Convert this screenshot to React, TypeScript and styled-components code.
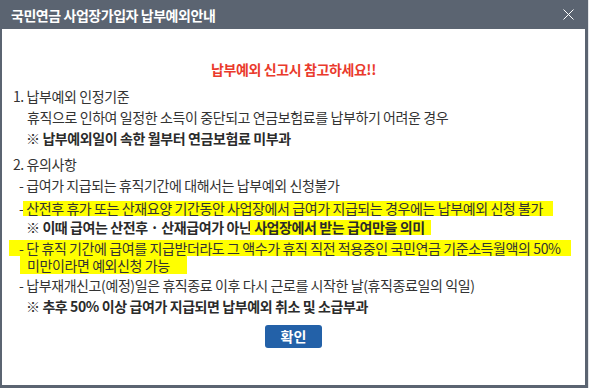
import React from "react";
import styled, { createGlobalStyle } from "styled-components";

const Global = createGlobalStyle`
  html, body { margin: 0; padding: 0; background: #e4e6e9; }
  body { font-family: "Noto Sans CJK KR", "Noto Sans", sans-serif; }
`;

const Dialog = styled.div`
  box-sizing: border-box;
  width: 588px;
  height: 388px;
  border-style: solid;
  border-color: #5b6471;
  border-width: 0 3px 3px 2px;
  background: #fff;
  display: flex;
  flex-direction: column;
`;

const Header = styled.div`
  height: 29px;
  flex: none;
  background: #5b6471;
  display: flex;
  align-items: center;
  justify-content: space-between;
  padding: 0 11px 0 9px;
`;

const Title = styled.h1`
  margin: 0;
  font-size: 14px;
  font-weight: 700;
  color: #fff;
  letter-spacing: -0.45px;
  line-height: 20px;
`;

const Close = styled.button`
  border: 0;
  background: none;
  padding: 0;
  width: 11px;
  height: 11px;
  display: flex;
  cursor: pointer;
`;

const Body = styled.div`
  flex: 1;
  padding: 0 0 0 11px;
  color: #333;
  font-size: 14px;
  letter-spacing: -0.4px;
`;

const Notice = styled.p`
  margin: 30px 0 6px -11px;
  text-align: center;
  color: #ea3a2c;
  font-weight: 700;
  line-height: 21px;
`;

const Row = styled.div<{ $indent?: number; $mt?: number; $bold?: boolean; $lh?: number }>`
  line-height: ${(p) => p.$lh ?? 21}px;
  margin-top: ${(p) => p.$mt ?? 0}px;
  padding-left: ${(p) => p.$indent ?? 0}px;
  font-weight: ${(p) => (p.$bold ? 700 : 400)};
  color: ${(p) => (p.$bold ? "#2b2b2b" : "#333")};
  white-space: nowrap;
`;

const Line = styled.div<{ $lh: number }>`
  line-height: ${(p) => p.$lh}px;
`;

const Mark = styled.span<{ $h: number; $pl: number; $pr: number }>`
  display: inline-block;
  background: #ffff00;
  line-height: ${(p) => p.$h}px;
  padding: 0 ${(p) => p.$pr}px 0 ${(p) => p.$pl}px;
  margin-left: -${(p) => p.$pl}px;
  margin-right: -${(p) => p.$pr}px;
`;

const Footer = styled.div`
  display: flex;
  justify-content: center;
  margin-top: 8px;
  margin-left: -11px;
`;

const OkButton = styled.button`
  width: 57px;
  height: 23px;
  border: 0;
  border-radius: 3px;
  background: #2361a8;
  color: #fff;
  font-family: "Noto Sans CJK KR", sans-serif;
  font-size: 14px;
  font-weight: 700;
  padding: 0;
  line-height: 23px;
  cursor: pointer;
`;

export default function App() {
  return (
    <>
      <Global />
      <Dialog>
        <Header>
          <Title>국민연금 사업장가입자 납부예외안내</Title>
          <Close aria-label="닫기">
            <svg width="11" height="11" viewBox="0 0 11 11">
              <path d="M0.5 0.5 L10.5 10.5 M10.5 0.5 L0.5 10.5" stroke="#fff" strokeWidth="1" />
            </svg>
          </Close>
        </Header>
        <Body>
          <Notice>납부예외 신고시 참고하세요!!</Notice>
          <Row>1. 납부예외 인정기준</Row>
          <Row $indent={14}>휴직으로 인하여 일정한 소득이 중단되고 연금보험료를 납부하기 어려운 경우</Row>
          <Row $indent={13} $bold>※ 납부예외일이 속한 월부터 연금보험료 미부과</Row>
          <Row $mt={5}>2. 유의사항</Row>
          <Row $indent={6}>- 급여가 지급되는 휴직기간에 대해서는 납부예외 신청불가</Row>
          <Row $indent={6} $mt={2}>
            -{" "}
            <Mark $h={15} $pl={3} $pr={10}>
              산전후 휴가 또는 산재요양 기간동안 사업장에서 급여가 지급되는 경우에는 납부예외 신청 불가
            </Mark>
          </Row>
          <Row $indent={13} $bold $mt={-2}>
            ※ 이때 급여는 산전후 · 산재급여가 아닌{" "}
            <Mark $h={15} $pl={4} $pr={6}>
              사업장에서 받는 급여만을 의미
            </Mark>
          </Row>
          <Row $indent={6} $mt={2}>
            <Line $lh={16}>
              <Mark $h={16} $pl={10} $pr={10}>
                - 단 휴직 기간에 급여를 지급받더라도 그 액수가 휴직 직전 적용중인 국민연금 기준소득월액의 50%
              </Mark>
            </Line>
            <Line $lh={18}>
              <Mark $h={18} $pl={7} $pr={17} style={{ marginLeft: 1 }}>
                미만이라면 예외신청 가능
              </Mark>
            </Line>
          </Row>
          <Row $indent={6} $mt={1}>- 납부재개신고(예정)일은 휴직종료 이후 다시 근로를 시작한 날(휴직종료일의 익일)</Row>
          <Row $indent={13} $bold>※ 추후 50% 이상 급여가 지급되면 납부예외 취소 및 소급부과</Row>
          <Footer>
            <OkButton>확인</OkButton>
          </Footer>
        </Body>
      </Dialog>
    </>
  );
}
